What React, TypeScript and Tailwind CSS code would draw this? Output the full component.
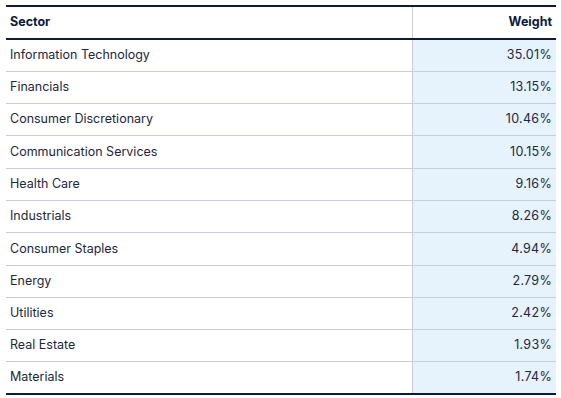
import React from "react";

const rows: [string, string][] = [
  ["Information Technology", "35.01%"],
  ["Financials", "13.15%"],
  ["Consumer Discretionary", "10.46%"],
  ["Communication Services", "10.15%"],
  ["Health Care", "9.16%"],
  ["Industrials", "8.26%"],
  ["Consumer Staples", "4.94%"],
  ["Energy", "2.79%"],
  ["Utilities", "2.42%"],
  ["Real Estate", "1.93%"],
  ["Materials", "1.74%"],
];

export default function App() {
  return (
    <div className="w-[561px] h-[398px] bg-white pt-[5px] pl-[6px] font-['Inter',sans-serif]">
      <table className="w-[550px] border-collapse border-t-2 border-b-2 border-[#0b1a3d] text-[12.5px]">
        <thead>
          <tr className="h-[33px] border-b-2 border-[#0b1a3d]">
            <th className="text-left font-bold text-[#0b1a3d] pl-[4px] border-r border-[#c9ced6]">Sector</th>
            <th className="w-[144px] text-right font-bold text-[#0b1a3d] pr-[4px]">Weight</th>
          </tr>
        </thead>
        <tbody>
          {rows.map(([name, w], i) => (
            <tr
              key={name}
              className={`h-[32.3px] ${i < rows.length - 1 ? "border-b border-[#c9ced6]" : ""}`}
            >
              <td className="pl-[4px] text-[#1c2740] border-r border-[#c9ced6]">{name}</td>
              <td className="text-right pr-[4px] tracking-[0.3px] text-[#1c2740] bg-[#e6f3fd]">{w}</td>
            </tr>
          ))}
        </tbody>
      </table>
    </div>
  );
}
